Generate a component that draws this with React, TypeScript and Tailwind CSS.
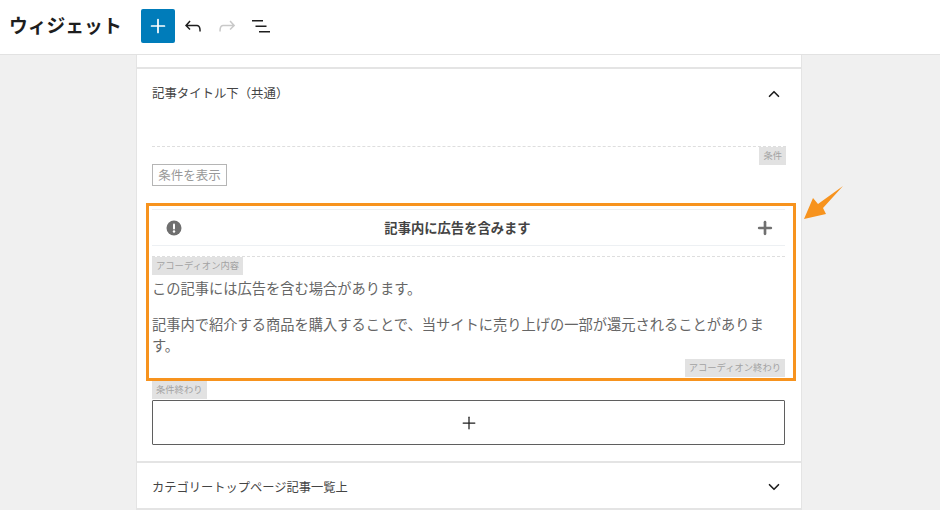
import { Plus, ChevronUp, ChevronDown } from "lucide-react";

const font = { fontFamily: '"Noto Sans CJK JP", "Liberation Sans", sans-serif' };

const Tag = ({ text, className = "" }: { text: string; className?: string }) => (
  <div className={`bg-[#e2e2e2] text-[#a3a3a3] text-[9.3px] leading-[17px] h-[18px] px-[4px] whitespace-nowrap ${className}`}>
    {text}
  </div>
);

const App = () => {
  return (
    <div className="w-[940px] h-[510px] overflow-hidden bg-[#f0f0f0] relative" style={font}>
      {/* Header */}
      <header className="h-[55px] bg-white border-b border-[#e2e2e2] flex items-center pl-[10px]">
        <h1 className="text-[18.8px] font-bold text-[#1e1e1e] w-[131px] leading-none pb-[3px] -ml-[1px] pr-[0px]">ウィジェット</h1>
        <button className="w-[34px] h-[34px] ml-[1px] mb-[3px] bg-[#007cba] rounded-[2px] flex items-center justify-center text-white">
          <Plus size={22} strokeWidth={1.9} />
        </button>
        <svg width="24" height="24" viewBox="0 0 24 24" className="ml-[6px] mb-[2px]" fill="#1e1e1e">
          <path d="M18.3 11.7c-.6-.6-1.4-.9-2.3-.9H6.7l2.9-3.3-1.1-1-4.5 5L8.5 16l1-1-2.7-2.7H16c.5 0 .9.2 1.3.5 1 1 1 3.4 1 4.5v.3h1.5v-.2c0-1.5 0-4.3-1.5-5.7z" />
        </svg>
        <svg width="24" height="24" viewBox="0 0 24 24" className="ml-[10px] mb-[2px]" fill="#c9c9c9">
          <path d="M15.6 6.5l-1.1 1 2.9 3.3H8c-.9 0-1.7.3-2.3.9-1.4 1.5-1.4 4.2-1.4 5.6v.2h1.5v-.3c0-1.1 0-3.5 1-4.5.3-.3.7-.5 1.3-.5h9.2L14.5 15l1.1 1.1 4.6-4.6-4.6-5z" />
        </svg>
        <svg width="24" height="24" viewBox="0 0 24 24" className="ml-[10px] mb-[2px]" fill="#1e1e1e">
          <path d="M3 6h11v1.5H3V6zm3.5 5.5h11V13h-11v-1.5zM21 17H10v1.5h11V17z" />
        </svg>
      </header>

      {/* Panel */}
      <main className="w-[666px] ml-[136px] h-[455px] bg-white border-x border-[#e4e4e4]">
        <div className="h-[12px]" />
        <section className="border-t-2 border-[#e4e4e4] h-[394px] px-[15px]">
          <div className="h-[47px] pt-[2px] flex items-center justify-between pr-[3px]">
            <span className="text-[12.4px] text-[#444]">記事タイトル下（共通）</span>
            <ChevronUp size={18} strokeWidth={2.2} className="text-[#1e1e1e]" />
          </div>

          <div className="mt-[30px] border-t border-dashed border-[#dedede] flex justify-end">
            <Tag text="条件" />
          </div>

          <div className="-mt-[1px] w-[75px] h-[22px] border border-[#b5b5b5] text-[#999] text-[12.5px] leading-[20px] text-center">
            条件を表示
          </div>

          {/* Highlighted block */}
          <div className="-mx-[6px] mt-[17px] w-[650px] h-[178px] border-[3px] border-[#f7931e] px-[3px]">
            <div className="w-[633px] h-[37px] mt-[3px] border-y border-[#edf0f3] flex items-center justify-between pl-[14px] pr-[10px]">
              <svg width="16" height="16" viewBox="0 0 16 16">
                <circle cx="8" cy="8" r="7.5" fill="#6f6f6f" />
                <rect x="7" y="3.5" width="2" height="6" rx="1" fill="#fff" />
                <circle cx="8" cy="11.5" r="1.2" fill="#fff" />
              </svg>
              <span className="text-[13.3px] font-bold text-[#444] mr-[22px]">記事内に広告を含みます</span>
              <Plus size={20} strokeWidth={3.2} className="text-[#707070]" />
            </div>

            <div className="w-[633px] mt-[10px] border-t border-dashed border-[#dedede]">
              <div className="flex">
                <Tag text="アコーディオン内容" />
              </div>
              <p className="text-[14.25px] leading-[21px] text-[#666] mt-[2px]">この記事には広告を含む場合があります。</p>
              <p className="text-[14.25px] leading-[21px] text-[#666] mt-[15px] pr-[10px]">
                記事内で紹介する商品を購入することで、当サイトに売り上げの一部が還元されることがあります。
              </p>
              <div className="flex justify-end mt-[4px]">
                <Tag text="アコーディオン終わり" />
              </div>
            </div>
          </div>

          <div className="flex">
            <Tag text="条件終わり" />
          </div>
          <div className="w-[633px] h-[45px] mt-[1px] border border-[#5f5f5f] rounded-[1px] flex items-center justify-center text-[#1e1e1e]">
            <Plus size={20} strokeWidth={1.5} />
          </div>
        </section>

        <section className="border-y-2 border-[#e4e4e4] h-[49px] pl-[15px] pt-[3px] flex items-center justify-between pr-[18px]">
          <span className="text-[12.25px] text-[#444]">カテゴリートップページ記事一覧上</span>
          <ChevronDown size={18} strokeWidth={2.2} className="text-[#1e1e1e]" />
        </section>
      </main>

      {/* Annotation arrow */}
      <svg className="absolute left-[804px] top-[184px]" width="42" height="38" viewBox="0 0 42 38">
        <path d="M39 2 L19 24 L22 30 L0 35 L9 14 L14 20 Z" fill="#f7931e" />
      </svg>
    </div>
  );
};

export default App;
